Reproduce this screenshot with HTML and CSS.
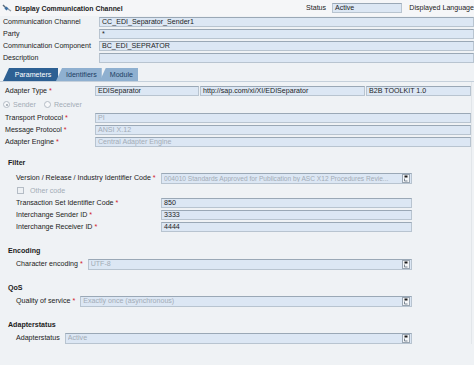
FILE: index.html
```html
<!DOCTYPE html>
<html lang="en">
  <head>
    <meta charset="UTF-8" />
    <meta name="viewport" content="width=device-width, initial-scale=1.0" />
    <title>Display Communication Channel</title>
    <link rel="stylesheet" href="styles.css">
  </head>
  <body>
    <div class="titlebar">
      <div class="title">
        <svg class="title-icon" width="10" height="8" viewBox="0 0 10 8">
          <path d="M1 1 L4 4" stroke="#5a6a7a" stroke-width="1.4" />
          <rect x="3" y="3" width="3" height="3" fill="#3d6fa3" transform="rotate(45 4.5 4.5)" />
          <path d="M6 5 L9 7" stroke="#8c99a6" stroke-width="1.4" />
        </svg>
        Display Communication Channel
      </div>
      <div class="status">
        <span class="status-label">Status</span>
        <span class="field status-field">Active</span>
        <span class="lang">Displayed Language</span>
      </div>
    </div>

    <div class="head-rows">
      <div class="row">
        <span class="label">Communication Channel</span>
        <span class="field">CC_EDI_Separator_Sender1</span>
      </div>
      <div class="row">
        <span class="label">Party</span>
        <span class="field">*</span>
      </div>
      <div class="row">
        <span class="label">Communication Component</span>
        <span class="field">BC_EDI_SEPRATOR</span>
      </div>
      <div class="row">
        <span class="label">Description</span>
        <span class="field"></span>
      </div>
    </div>

    <div class="tabs">
      <span class="tab active">Parameters</span>
      <span class="tab">Identifiers</span>
      <span class="tab">Module</span>
    </div>

    <div class="panel">
      <div class="row adapter-row">
        <span class="label">Adapter Type <em>*</em></span>
        <span class="field type-name">EDISeparator</span>
        <span class="field type-ns">http://sap.com/xi/XI/EDISeparator</span>
        <span class="field type-sw">B2B TOOLKIT 1.0</span>
      </div>
      <div class="radios">
        <span class="radio checked"></span><span class="radio-text">Sender</span>
        <span class="radio"></span><span class="radio-text">Receiver</span>
      </div>
      <div class="row adapter-row">
        <span class="label">Transport Protocol <em>*</em></span>
        <span class="field disabled">PI</span>
      </div>
      <div class="row adapter-row">
        <span class="label">Message Protocol <em>*</em></span>
        <span class="field disabled">ANSI X.12</span>
      </div>
      <div class="row adapter-row">
        <span class="label">Adapter Engine <em>*</em></span>
        <span class="field disabled">Central Adapter Engine</span>
      </div>

      <div class="section first filter">
        <div class="heading">Filter</div>
        <div class="row">
          <span class="label">Version / Release / Industry Identifier Code <em>*</em></span>
          <span class="field disabled select">
            <span class="value long">004010 Standards Approved for Publication by ASC X12 Procedures Revie...</span>
            <svg class="drop" width="8" height="9" viewBox="0 0 8 9">
              <rect x="0.5" y="0.5" width="7" height="8" fill="#f4f6f8" stroke="#9aa6b2" />
              <rect x="2.5" y="1.5" width="3" height="2" fill="#1a1a1a" />
              <path d="M2.5 4.5 V7 H5.5" stroke="#7b8692" fill="none" />
            </svg>
          </span>
        </div>
        <div class="check-row">
          <span class="checkbox"></span><span class="check-text">Other code</span>
        </div>
        <div class="row">
          <span class="label">Transaction Set Identifier Code <em>*</em></span>
          <span class="field">850</span>
        </div>
        <div class="row">
          <span class="label">Interchange Sender ID <em>*</em></span>
          <span class="field">3333</span>
        </div>
        <div class="row">
          <span class="label">Interchange Receiver ID <em>*</em></span>
          <span class="field">4444</span>
        </div>
      </div>

      <div class="section">
        <div class="heading">Encoding</div>
        <div class="row">
          <span class="label">Character encoding <em>*</em></span>
          <span class="field disabled select">
            <span class="value">UTF-8</span>
            <svg class="drop" width="8" height="9" viewBox="0 0 8 9">
              <rect x="0.5" y="0.5" width="7" height="8" fill="#f4f6f8" stroke="#9aa6b2" />
              <rect x="2.5" y="1.5" width="3" height="2" fill="#1a1a1a" />
              <path d="M2.5 4.5 V7 H5.5" stroke="#7b8692" fill="none" />
            </svg>
          </span>
        </div>
      </div>

      <div class="section">
        <div class="heading">QoS</div>
        <div class="row">
          <span class="label">Quality of service <em>*</em></span>
          <span class="field disabled select">
            <span class="value">Exactly once (asynchronous)</span>
            <svg class="drop" width="8" height="9" viewBox="0 0 8 9">
              <rect x="0.5" y="0.5" width="7" height="8" fill="#f4f6f8" stroke="#9aa6b2" />
              <rect x="2.5" y="1.5" width="3" height="2" fill="#1a1a1a" />
              <path d="M2.5 4.5 V7 H5.5" stroke="#7b8692" fill="none" />
            </svg>
          </span>
        </div>
      </div>

      <div class="section">
        <div class="heading">Adapterstatus</div>
        <div class="row">
          <span class="label">Adapterstatus</span>
          <span class="field disabled select">
            <span class="value">Active</span>
            <svg class="drop" width="8" height="9" viewBox="0 0 8 9">
              <rect x="0.5" y="0.5" width="7" height="8" fill="#f4f6f8" stroke="#9aa6b2" />
              <rect x="2.5" y="1.5" width="3" height="2" fill="#1a1a1a" />
              <path d="M2.5 4.5 V7 H5.5" stroke="#7b8692" fill="none" />
            </svg>
          </span>
        </div>
      </div>
    </div>
  </body>
</html>
```

FILE: styles.css
```css
body {
  font-family: "Liberation Sans", Arial, sans-serif;
  font-size: 7.1px;
  margin: 0;
  padding: 0;
  width: 474px;
  height: 365px;
  overflow: hidden;
  background: #eff2f5;
  color: #222;
  white-space: nowrap;
}
em {
  font-style: normal;
  color: #d0202a;
}

/* title bar */
.titlebar {
  height: 16px;
  display: flex;
  align-items: center;
  justify-content: space-between;
  background: #f5f6f8;
}
.title {
  display: flex;
  align-items: center;
  gap: 3px;
  padding-left: 2px;
  font-weight: bold;
  font-size: 6.9px;
  color: #1c1c1c;
}
.status {
  display: flex;
  align-items: center;
  width: 168px;
}
.status-label {
  width: 26px;
  flex: none;
}
.status-field {
  flex: none;
  width: 75px;
  height: 12px;
  margin-right: 7px;
}
.lang {
  flex: none;
}

/* fields */
.field {
  display: flex;
  align-items: center;
  box-sizing: border-box;
  height: 10px;
  flex: 1;
  min-width: 0;
  padding: 0 2px;
  background: #dce7f4;
  border: 1px solid #b8c4d0;
  border-top-color: #9aa8b6;
  color: #1e1e1e;
}
.field.disabled {
  color: #a3acb6;
}
.select {
  height: 11px;
}
.select .value {
  flex: 1;
  overflow: hidden;
}
.value.long {
  font-size: 6.6px;
}
.drop {
  flex: none;
  margin-right: -1px;
}

/* header rows */
.head-rows {
  padding-left: 3px;
}
.row {
  display: flex;
  align-items: center;
  height: 12px;
}
.head-rows .label {
  width: 96px;
  flex: none;
}

/* tabs */
.tabs {
  display: flex;
  height: 13px;
  margin-top: 4px;
  padding-left: 3px;
  border-bottom: 1px solid #c5d0db;
}
.tab {
  display: flex;
  align-items: center;
  justify-content: center;
  padding: 0 5px 0 10px;
  margin-right: -2px;
  background: #8fb0d0;
  color: #1d3e63;
  clip-path: polygon(6px 0, 100% 0, 100% 100%, 0 100%);
}
.tab.active {
  width: 40px;
  background: #2d6093;
  color: #fff;
}

/* panel */
.panel {
  padding-top: 3px;
  margin-right: 2px;
  border-right: 1px solid #e2e6ea;
}
.adapter-row {
  padding-left: 5px;
}
.adapter-row .label {
  width: 90px;
  flex: none;
}
.type-name {
  flex: none;
  width: 104px;
  margin-right: 1px;
}
.type-ns {
  flex: none;
  width: 165px;
  margin-right: 1px;
}
.radios {
  display: flex;
  align-items: center;
  height: 15px;
  padding-left: 3px;
  color: #a3acb6;
}
.radio {
  width: 5px;
  height: 5px;
  border: 1px solid #b4bcc5;
  border-radius: 50%;
  background: #f7f8fa;
  position: relative;
}
.radio.checked::after {
  content: "";
  position: absolute;
  left: 1.5px;
  top: 1.5px;
  width: 2px;
  height: 2px;
  border-radius: 50%;
  background: #9aa3ad;
}
.radio-text {
  margin-left: 3px;
  margin-right: 8px;
}

/* sections */
.section {
  width: 412px;
  margin-top: 12px;
}
.section.first {
  margin-top: 9px;
}
.heading {
  height: 12px;
  line-height: 12px;
  padding-left: 8px;
  margin-bottom: 1px;
  font-weight: bold;
  color: #1c1c1c;
}
.filter .heading {
  margin-bottom: 3px;
}
.section .row {
  padding-left: 16px;
  gap: 5px;
}
.filter .row .label {
  width: 140px;
  flex: none;
}
.check-row {
  display: flex;
  align-items: center;
  height: 13px;
  padding-left: 17px;
  color: #a3acb6;
}
.checkbox {
  width: 5px;
  height: 5px;
  border: 1px solid #b4bcc5;
  background: #eef1f4;
  margin-right: 6px;
}
```
